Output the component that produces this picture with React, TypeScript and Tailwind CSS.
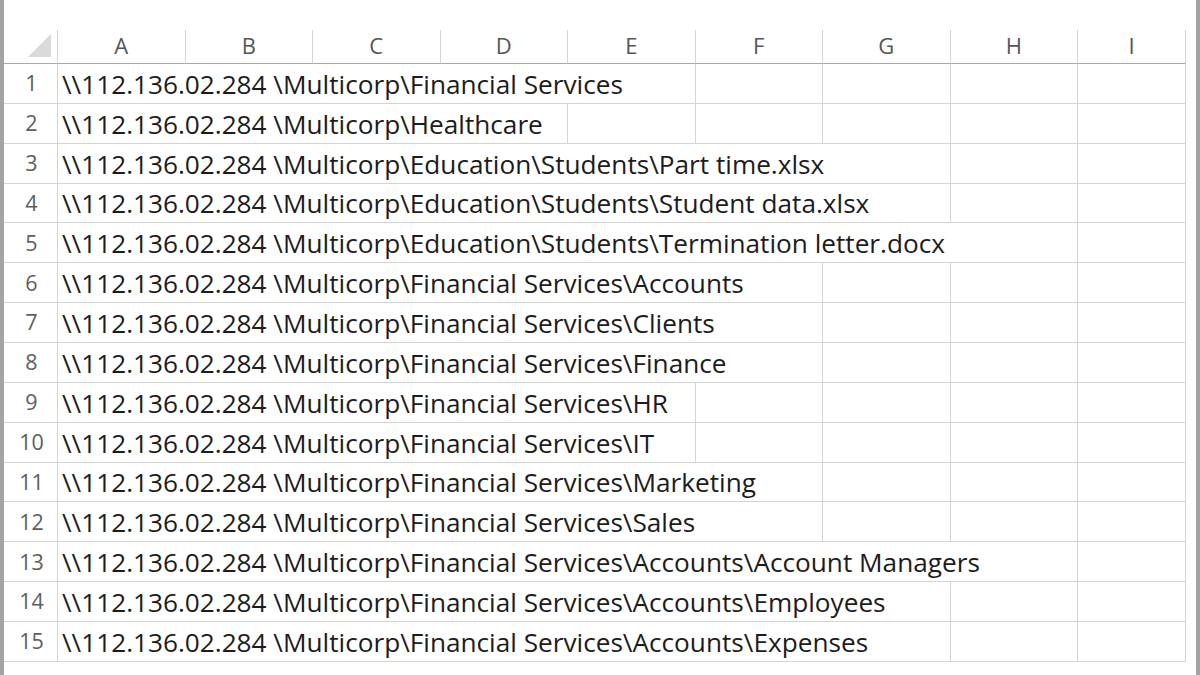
import React from "react";

const rows: [string, number][] = [
  ["\\\\112.136.02.284 \\Multicorp\\Financial Services", 5],
  ["\\\\112.136.02.284 \\Multicorp\\Healthcare", 4],
  ["\\\\112.136.02.284 \\Multicorp\\Education\\Students\\Part time.xlsx", 7],
  ["\\\\112.136.02.284 \\Multicorp\\Education\\Students\\Student data.xlsx", 7],
  ["\\\\112.136.02.284 \\Multicorp\\Education\\Students\\Termination letter.docx", 8],
  ["\\\\112.136.02.284 \\Multicorp\\Financial Services\\Accounts", 6],
  ["\\\\112.136.02.284 \\Multicorp\\Financial Services\\Clients", 6],
  ["\\\\112.136.02.284 \\Multicorp\\Financial Services\\Finance", 6],
  ["\\\\112.136.02.284 \\Multicorp\\Financial Services\\HR", 5],
  ["\\\\112.136.02.284 \\Multicorp\\Financial Services\\IT", 5],
  ["\\\\112.136.02.284 \\Multicorp\\Financial Services\\Marketing", 6],
  ["\\\\112.136.02.284 \\Multicorp\\Financial Services\\Sales", 6],
  ["\\\\112.136.02.284 \\Multicorp\\Financial Services\\Accounts\\Account Managers", 8],
  ["\\\\112.136.02.284 \\Multicorp\\Financial Services\\Accounts\\Employees", 7],
  ["\\\\112.136.02.284 \\Multicorp\\Financial Services\\Accounts\\Expenses", 7],
];

const cols = ["A", "B", "C", "D", "E", "F", "G", "H", "I"];

const spanClass: Record<number, string> = {
  4: "col-span-4",
  5: "col-span-5",
  6: "col-span-6",
  7: "col-span-7",
  8: "col-span-8",
};

export default function App() {
  return (
    <div className="flex h-[675px] w-[1200px] bg-white">
      <div className="w-[4px] bg-[#a3a3a3]" />
      <div className="flex-1 pt-[30px]">
        <div className="grid grid-cols-[54px_repeat(8,127.5px)_108px] text-[#1c1c1c] [font-family:'Open_Sans',sans-serif]">
          <div className="flex h-[34px] items-end justify-end border-b border-r border-b-[#a8a8a8] border-r-[#d4d4d4] pb-[6px] pr-[6px]">
            <div className="h-0 w-0 border-b-[23px] border-l-[23px] border-b-[#dadada] border-l-transparent" />
          </div>
          {cols.map((c) => (
            <div
              key={c}
              className="flex h-[34px] items-center justify-center border-b border-r border-b-[#a8a8a8] border-r-[#d4d4d4] pb-[3px] text-[22px] text-[#555]"
            >
              {c}
            </div>
          ))}
          {rows.map(([t, span], i) => (
            <React.Fragment key={i}>
              <div className="flex h-[39.87px] items-center justify-center border-b border-r border-[#d4d4d4] pl-[2px] text-[21.5px] text-[#5e5e5e]">
                {i + 1}
              </div>
              <div
                className={`flex h-[39.87px] items-center whitespace-nowrap border-b border-r border-[#d4d4d4] pl-[4px] pt-[2px] text-[26.2px] ${spanClass[span]}`}
              >
                {t}
              </div>
              {Array.from({ length: 9 - span }).map((_, j) => (
                <div key={j} className="h-[39.87px] border-b border-r border-[#d4d4d4]" />
              ))}
            </React.Fragment>
          ))}
        </div>
      </div>
      <div className="w-[4px] bg-[#a3a3a3]" />
    </div>
  );
}
